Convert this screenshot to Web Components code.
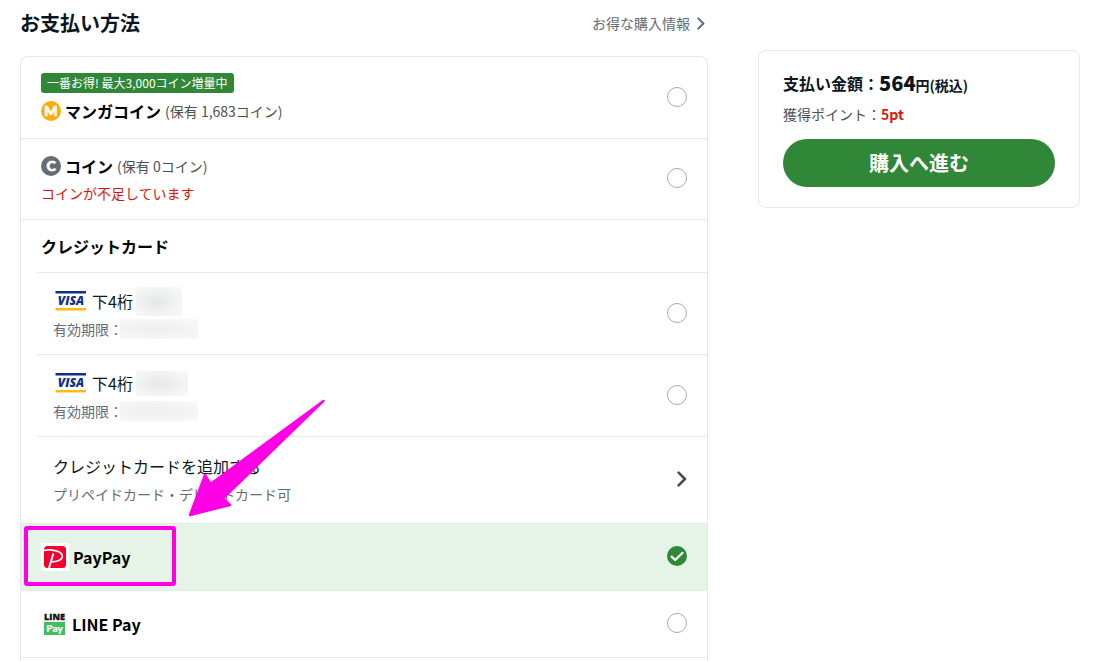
<!DOCTYPE html>
<html lang="ja">
<head>
<meta charset="utf-8">
<title>お支払い方法</title>
<style>
  body { margin: 0; background: #fff; color: #0b1620; font-family: "Noto Sans CJK JP", "Noto Sans", sans-serif; font-size: 16px; line-height: 24px; }
</style>
</head>
<body>
<checkout-page></checkout-page>

<script>
const define = (name, html, setup) => {
  const template = document.createElement('template');
  template.innerHTML = html;
  customElements.define(name, class extends HTMLElement {
    constructor() {
      super();
      this.attachShadow({ mode: 'open' }).append(template.content.cloneNode(true));
    }
    connectedCallback() { if (setup) setup(this, this.shadowRoot); }
  });
};

/* Round M / C coin badge */
define('coin-icon', `
  <style>
    :host { display: block; flex: none; width: 20px; height: 20px; color: #fbac0a; }
    :host([kind="C"]) { color: #666c73; }
    svg { display: block; }
    text { font: 900 14px Lato, sans-serif; fill: #fff; stroke: #fff; stroke-width: .7; text-anchor: middle; }
  </style>
  <svg width="20" height="20" viewBox="0 0 20 20" aria-hidden="true">
    <circle cx="10" cy="10" r="10" fill="currentColor"/><text x="10" y="15"></text>
  </svg>`,
  (host, root) => { root.querySelector('text').textContent = host.getAttribute('kind'); });

define('visa-logo', `
  <style>
    :host { display: block; flex: none; width: 36px; height: 20px; }
    svg { display: block; }
    text { font: italic 800 12px "Open Sans", sans-serif; fill: #0f2f87; }
  </style>
  <svg width="36" height="20" viewBox="0 0 36 20" role="img" aria-label="VISA">
    <rect x="2.5" width="30.5" height="2.5" fill="#0f2f87"/>
    <rect x="2.5" y="17" width="30.5" height="2.5" fill="#fdb913"/>
    <text x="18" y="14" text-anchor="middle">VISA</text>
  </svg>`);

define('paypay-logo', `
  <style>:host { display: block; flex: none; width: 28px; height: 28px; } svg { display: block; }</style>
  <svg width="28" height="28" viewBox="0 0 28 28" aria-hidden="true">
    <rect width="28" height="28" fill="#fff"/>
    <rect x="3" y="3" width="22" height="22" rx="3.5" fill="#f8002b"/>
    <path d="M3 7.4C10 6 21.6 8 21.4 13.2C21.2 17.8 15 18.8 9.4 18.9" fill="none" stroke="#fff" stroke-width="1.7"/>
    <path d="M12.4 10.5L8 25" fill="none" stroke="#fff" stroke-width="2"/>
  </svg>`);

define('linepay-logo', `
  <style>
    :host { display: block; flex: none; width: 27px; height: 28px; }
    svg { display: block; }
    .line { font: 800 9px "Open Sans", sans-serif; fill: #111; stroke: #111; stroke-width: .3; }
    .pay { font: 900 10px Lato, sans-serif; fill: #fff; stroke: #fff; stroke-width: .2; }
  </style>
  <svg width="27" height="28" viewBox="0 0 27 28" aria-hidden="true">
    <text class="line" x="13.5" y="9.5" text-anchor="middle">LINE</text>
    <rect x="3" y="12" width="21" height="13" fill="#42bf5b"/>
    <text class="pay" x="13.5" y="21.5" text-anchor="middle">Pay</text>
  </svg>`);

define('chevron-icon', `
  <style>
    :host { display: block; flex: none; width: 10px; height: 16px; }
    :host([small]) { width: 8px; height: 13px; }
    svg { display: block; width: 100%; height: 100%; }
  </style>
  <svg viewBox="0 0 10 16" aria-hidden="true"><path d="M1.6 1.6L8 8L1.6 14.4" fill="none" stroke="currentColor" stroke-width="2.6" stroke-linecap="round" stroke-linejoin="round"/></svg>`);

/* Blurred-out private digits */
define('masked-text', `
  <style>
    :host { display: block; flex: none; width: 46px; height: 29px; margin: -8px 0; background: radial-gradient(ellipse at 45% 50%, #e8eaea 10%, #f8f8f8 90%); }
    :host([size="m"]) { width: 52px; height: 25px; }
    :host([size="l"]) { width: 78px; height: 20px; margin-left: -3px; background: radial-gradient(ellipse at 45% 50%, #efefef 10%, #f8f8f8 90%); }
  </style>`);

/* One selectable method: slots "badge", default (title) and "note" */
define('pay-option', `
  <style>
    :host { display: block; border-bottom: 1px solid #e8e8e8; }
    :host([inset]) { margin-left: 16px; }
    :host([selected]) { background: #e6f4e7; }
    label { display: flex; align-items: center; justify-content: space-between; padding: 15px 20px; cursor: pointer; }
    :host([inset]) label { padding: 15px 20px 14px 16px; }
    :host([brand]) label { padding: 16px 20px; }
    .text { display: grid; gap: 4px; }
    .title { display: flex; align-items: center; gap: 4px; height: 24px; font-weight: 700; color: #000; }
    :host([inset]) .title { height: 26px; gap: 3px; font-weight: 400; color: #0b1620; }
    :host([brand]) .title { height: 34px; }
    ::slotted([slot="badge"]) { justify-self: start; margin: 1px 0 2px; padding: 0 6px; border-radius: 3px; background: #2f8737; color: #fff; font-size: 12px; line-height: 20px; }
    ::slotted([slot="note"]) { display: flex; align-items: center; font-size: 14px; line-height: 22px; color: #666c73; }
    ::slotted(.alert) { color: #d9190b; }
    ::slotted(small) { font-size: 14px; font-weight: 400; color: #4b5157; }
    input { appearance: none; flex: none; width: 20px; height: 20px; margin: 0 0 2px; border: 1px solid #aaa; border-radius: 50%; background: #fff; }
    input:checked { border: 0; background: #2f8737 url("data:image/svg+xml,%3Csvg xmlns='http://www.w3.org/2000/svg' viewBox='0 0 20 20'%3E%3Cpath d='M4.6 10.6L8.2 14L15.6 6.8' fill='none' stroke='white' stroke-width='2.2' stroke-linecap='round'/%3E%3C/svg%3E"); }
  </style>
  <label>
    <span class="text">
      <slot name="badge"></slot>
      <span class="title"><slot></slot></span>
      <slot name="note"></slot>
    </span>
    <input type="radio" name="method">
  </label>`,
  (host, root) => {
    const input = root.querySelector('input');
    input.checked = host.hasAttribute('selected');
    input.addEventListener('change', () => {
      for (const other of host.parentNode.querySelectorAll('pay-option')) {
        other.toggleAttribute('selected', other === host);
        other.shadowRoot.querySelector('input').checked = other === host;
      }
    });
  });

define('add-card-link', `
  <style>
    :host { display: block; margin-left: 16px; }
    a { display: flex; align-items: center; justify-content: space-between; padding: 17px 20px 17px 16px; color: inherit; text-decoration: none; }
    .text { display: grid; gap: 4px; }
    small { font-size: 14px; color: #666c73; }
    chevron-icon { color: #464c52; margin-bottom: 3px; }
  </style>
  <a href="#add-card"><span class="text"><span>クレジットカードを追加する</span><small>プリペイドカード・デビットカード可</small></span><chevron-icon></chevron-icon></a>`);

define('method-list', `
  <style>
    :host { display: block; border: 1px solid #e8e8e8; border-bottom: 0; border-radius: 8px 8px 0 0; padding-bottom: 3px; }
    h2 { margin: 0; padding: 14px 20px; font-size: 16px; line-height: 24px; color: #000; }
    .group { border-bottom: 1px solid #e8e8e8; }
    hr { margin: 0 0 0 16px; border: 0; border-top: 1px solid #e8e8e8; }
  </style>
  <pay-option><span slot="badge">一番お得! 最大3,000コイン増量中</span><coin-icon kind="M"></coin-icon>マンガコイン<small>(保有 1,683コイン)</small></pay-option>
  <pay-option><coin-icon kind="C"></coin-icon>コイン<small>(保有 0コイン)</small><span slot="note" class="alert">コインが不足しています</span></pay-option>
  <h2>クレジットカード</h2>
  <hr>
  <pay-option inset><visa-logo></visa-logo><span>下4桁</span><masked-text></masked-text><span slot="note">有効期限：<masked-text size="l"></masked-text></span></pay-option>
  <pay-option inset><visa-logo></visa-logo><span>下4桁</span><masked-text size="m"></masked-text><span slot="note">有効期限：<masked-text size="l"></masked-text></span></pay-option>
  <div class="group"><add-card-link></add-card-link></div>
  <pay-option brand selected><paypay-logo></paypay-logo>PayPay</pay-option>
  <pay-option brand><linepay-logo></linepay-logo>LINE Pay</pay-option>`);

define('order-summary', `
  <style>
    :host { display: block; border: 1px solid #e8e8e8; border-radius: 8px; padding: 20px 24px; }
    p { margin: 0; }
    .total { display: flex; align-items: center; height: 24px; font-weight: 700; line-height: 24px; }
    .total b { font-size: 20px; }
    .total small { font-size: 14px; line-height: 14px; }
    .points { margin-top: 8px; font-size: 14px; line-height: 22px; color: #4b5157; }
    .points b { color: #d9190b; }
    button { display: block; width: 100%; height: 48px; margin-top: 14px; padding: 0; border: 0; border-radius: 24px; background: #2f8737; color: #fff; font: 700 20px/48px "Noto Sans CJK JP", sans-serif; cursor: pointer; }
  </style>
  <p class="total">支払い金額：<span><b>564</b><small>円(税込)</small></span></p>
  <p class="points">獲得ポイント：<b>5pt</b></p>
  <button type="button">購入へ進む</button>`);

/* Marker frame and arrow lying over the list */
define('guide-marker', `
  <style>
    :host { position: absolute; left: 0; top: 0; pointer-events: none; }
    svg { display: block; }
  </style>
  <svg width="330" height="600" viewBox="0 0 330 600" aria-hidden="true">
    <rect x="26" y="528" width="148" height="56" rx="1" fill="none" stroke="#ff00e6" stroke-width="4"/>
    <path d="M190 515L205 475L210.5 484L323.5 401L223 498.5L230 505Z" fill="#ff00e6" stroke="#ff00e6" stroke-width="2.4" stroke-linejoin="round"/>
  </svg>`);

define('checkout-page', `
  <style>
    :host { display: grid; grid-template-columns: minmax(0, 1fr) 322px; gap: 50px; align-items: start; padding: 0 18px 0 20px; position: relative; }
    header { display: flex; align-items: center; justify-content: space-between; padding: 8px 0 18px; }
    h1 { margin: 0; font-size: 20px; line-height: 30px; }
    a { display: flex; align-items: center; gap: 7px; padding-right: 3px; font-size: 14px; color: #666c73; text-decoration: none; }
    order-summary { margin-top: 50px; }
  </style>
  <main>
    <header><h1>お支払い方法</h1><a href="#offers">お得な購入情報<chevron-icon small></chevron-icon></a></header>
    <method-list></method-list>
  </main>
  <order-summary></order-summary>
  <guide-marker></guide-marker>`);
</script>
</body>
</html>
